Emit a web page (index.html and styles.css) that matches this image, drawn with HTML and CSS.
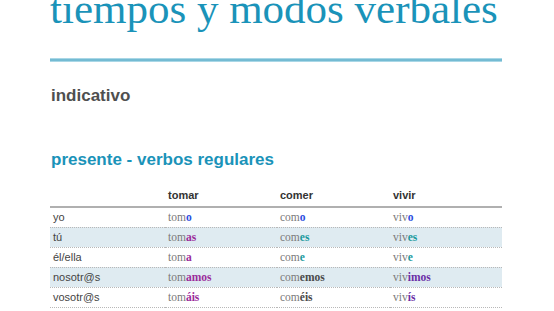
FILE: index.html
```html
<!DOCTYPE html>
<html lang="es">
<head>
<meta charset="utf-8">
<link rel="stylesheet" href="styles.css">
</head>
<body>
<div class="page">
  <h1 class="title">tiempos y modos verbales</h1>
  <div class="rule"></div>
  <h2 class="mood">indicativo</h2>
  <h3 class="tense">presente - verbos regulares</h3>
  <table class="conj">
    <colgroup>
      <col class="col-pr"><col class="col-v1"><col class="col-v2"><col class="col-v3">
    </colgroup>
    <thead>
      <tr><th></th><th>tomar</th><th>comer</th><th>vivir</th></tr>
    </thead>
    <tbody>
      <tr><td class="pr">yo</td><td class="v">tom<b class="c-blue">o</b></td><td class="v">com<b class="c-blue">o</b></td><td class="v">viv<b class="c-blue">o</b></td></tr>
      <tr class="alt"><td class="pr">tú</td><td class="v">tom<b class="c-mag">as</b></td><td class="v">com<b class="c-teal">es</b></td><td class="v">viv<b class="c-teal">es</b></td></tr>
      <tr><td class="pr">él/ella</td><td class="v">tom<b class="c-mag">a</b></td><td class="v">com<b class="c-teal">e</b></td><td class="v">viv<b class="c-teal">e</b></td></tr>
      <tr class="alt"><td class="pr">nosotr@s</td><td class="v">tom<b class="c-mag">amos</b></td><td class="v">com<b class="c-dark">emos</b></td><td class="v">viv<b class="c-vio">imos</b></td></tr>
      <tr><td class="pr">vosotr@s</td><td class="v">tom<b class="c-mag">áis</b></td><td class="v">com<b class="c-dark">éis</b></td><td class="v">viv<b class="c-vio">ís</b></td></tr>
    </tbody>
  </table>
</div>
</body>
</html>
```

FILE: styles.css
```css
html, body {
  margin: 0;
  padding: 0;
  background: #ffffff;
  overflow: hidden;
}
.page {
  width: 452px;
  margin: 0 0 0 50px;
}
.title {
  margin: -19px 0 0 0;
  font-family: "Liberation Serif", "DejaVu Serif", serif;
  font-weight: normal;
  font-size: 43px;
  line-height: 56px;
  color: #1a93b9;
  white-space: nowrap;
}
.rule {
  margin-top: 21px;
  height: 2px;
  border-top: 1px solid #a9d7e6;
  border-bottom: 1px solid #a9d7e6;
  background: #74bbd3;
}
.mood {
  margin: 24px 0 0 1px;
  font-family: "Liberation Sans", Arial, sans-serif;
  font-weight: bold;
  font-size: 17px;
  line-height: 20px;
  color: #4f4f4f;
}
.tense {
  margin: 44px 0 0 1px;
  font-family: "Liberation Sans", Arial, sans-serif;
  font-weight: bold;
  font-size: 17px;
  line-height: 20px;
  color: #1a93b9;
}
.conj {
  margin-top: 17px;
  width: 452px;
  border-collapse: collapse;
  table-layout: fixed;
  font-size: 11px;
}
.col-pr { width: 115px; }
.col-v1 { width: 112px; }
.col-v2 { width: 113px; }
.col-v3 { width: 112px; }
.conj th,
.conj td {
  box-sizing: border-box;
}
.conj th {
  text-align: left;
  font-family: "Liberation Sans", Arial, sans-serif;
  font-weight: bold;
  color: #333333;
  padding: 0 3px 4px 3px;
  height: 20px;
  border-bottom: 2px solid #b0b0b0;
}
.conj td {
  height: 20px;
  padding: 0 3px;
  border-bottom: 1px dotted #b8b8b8;
  vertical-align: middle;
}
.conj tr.alt td {
  background: #dfebf1;
}
.pr {
  font-family: "Liberation Sans", Arial, sans-serif;
  color: #444444;
}
.v {
  font-family: "Liberation Serif", "DejaVu Serif", serif;
  font-size: 11.5px;
  color: #7a7a7a;
}
.v b { font-weight: bold; }
.c-blue { color: #2a4de0; }
.c-mag { color: #9b2c9b; }
.c-teal { color: #1b9a9e; }
.c-dark { color: #4a4a4a; }
.c-vio { color: #6b2fa6; }
```
